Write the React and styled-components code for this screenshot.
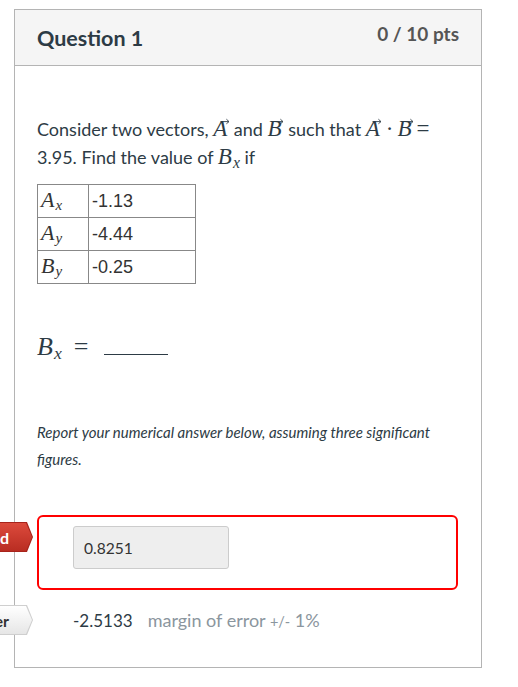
import React from "react";
import styled, { createGlobalStyle } from "styled-components";

const GlobalStyle = createGlobalStyle`
  html, body {
    margin: 0;
    padding: 0;
    background: #fff;
  }
  body {
    font-family: Lato, "Noto Sans", sans-serif;
    color: #2d3b45;
    overflow: hidden;
  }
`;

const Page = styled.div`
  padding: 9px 0 0 14px;
`;

const Card = styled.div`
  position: relative;
  box-sizing: border-box;
  width: 468px;
  height: 659px;
  border: 1px solid #b4b4b4;
`;

const Header = styled.div`
  display: flex;
  justify-content: space-between;
  align-items: flex-start;
  height: 56px;
  box-sizing: border-box;
  padding: 0 22px;
  background: #f5f5f5;
  border-bottom: 1px solid #b4b4b4;
`;

const Title = styled.h2`
  margin: 15px 0 0;
  font-size: 21.5px;
  font-weight: 700;
  color: #2d3b45;
`;

const Points = styled.div`
  margin-top: 12px;
  font-size: 19px;
  font-weight: 700;
  color: #555;
`;

const Body = styled.div`
  padding: 49px 22px 0 22px;
`;

const Text = styled.p`
  margin: 0;
  font-size: 18px;
  line-height: 28px;
  color: #2d3b45;
`;

const M = styled.span`
  font-family: "Liberation Serif", "DejaVu Serif", serif;
  font-style: italic;
  font-size: ${(p) => p.$size || "1.28em"};
  line-height: 0;
`;

const Op = styled.span`
  font-family: "Liberation Serif", "DejaVu Serif", serif;
  font-size: ${(p) => p.$size || "1.28em"};
  margin: 0 ${(p) => p.$gap || "4px"};
  line-height: 0;
`;

const Sub = styled.sub`
  font-family: "Liberation Serif", "DejaVu Serif", serif;
  font-style: italic;
  font-size: 0.68em;
  vertical-align: -0.25em;
  margin-left: 1px;
`;

const VecWrap = styled.span`
  position: relative;
  display: inline-block;
  padding-right: 2px;
`;

const Arrow = styled.svg`
  position: absolute;
  left: 40%;
  top: -10px;
  width: 10px;
  height: 7px;
`;

const ValuesTable = styled.table`
  margin-top: 13px;
  border-collapse: collapse;
  font-family: "Liberation Sans", Arial, sans-serif;
  font-size: 18px;
  color: #333;
`;

const Cell = styled.td`
  border: 1px solid #888;
  height: 33px;
  padding: 0 3px;
  width: ${(p) => p.$w}px;
  box-sizing: border-box;
`;

const Equation = styled.div`
  margin-top: 63px;
  display: flex;
  align-items: baseline;
  height: 40px;
  font-family: "Liberation Serif", "DejaVu Serif", serif;
  font-size: 26px;
  color: #2d3b45;
`;

const Blank = styled.span`
  display: inline-block;
  width: 64px;
  border-bottom: 1.5px solid #2d3b45;
  margin-left: 4px;
`;

const Note = styled.p`
  margin: 32px 0 0;
  font-size: 15px;
  font-style: italic;
  line-height: 27px;
  color: #2d3b45;
`;

const Answers = styled.div`
  position: relative;
  margin-top: 42px;
  padding: 0 23px 0 22px;
`;

const AnswerBox = styled.div`
  box-sizing: border-box;
  height: 75px;
  padding: 9px 0 0 34px;
  border: 2px solid #f00;
  border-radius: 6px;
`;

const Input = styled.div`
  box-sizing: border-box;
  width: 156px;
  height: 43px;
  padding: 0 10px;
  display: flex;
  align-items: center;
  background: #eee;
  border: 1px solid #ccc;
  border-radius: 3px;
  font-size: 15.6px;
  color: #333;
`;

const CorrectRow = styled.div`
  display: flex;
  align-items: center;
  height: 40px;
  margin-top: 10px;
  padding-left: 36px;
`;

const Tag = styled.div`
  position: absolute;
  left: -98px;
  top: ${(p) => p.$top}px;
  width: 116px;
  height: 30px;
  background: ${(p) => (p.$red ? "#a8231b" : "#cfcfcf")};
  clip-path: polygon(0 0, calc(100% - 6px) 0, 100% 50%, calc(100% - 6px) 100%, 0 100%);
`;

const TagFace = styled.div`
  position: absolute;
  inset: 1px 1px 1px 0;
  display: flex;
  align-items: center;
  justify-content: flex-end;
  padding-right: 23px;
  font-size: 16px;
  font-weight: 700;
  white-space: nowrap;
  color: ${(p) => (p.$red ? "#fff" : "#333")};
  background: ${(p) =>
    p.$red
      ? "linear-gradient(#dc4a3c, #b92d22)"
      : "linear-gradient(#ffffff, #e6e6e6)"};
  clip-path: polygon(0 0, calc(100% - 6px) 0, 100% 50%, calc(100% - 6px) 100%, 0 100%);
`;

const Correct = styled.span`
  font-size: 17px;
  color: #2d3b45;
`;

const Margin = styled.span`
  margin-left: 15px;
  font-size: 18px;
  color: #8b969e;
`;

const Small = styled.span`
  font-size: 14.5px;
`;

function Vec({ children }) {
  return (
    <VecWrap>
      <Arrow viewBox="0 0 10 7">
        <path d="M0.5 3.6 H8.8 M6.4 1.2 L9 3.6 L6.4 5.8" stroke="#2d3b45" strokeWidth="0.9" fill="none" />
      </Arrow>
      <M $size="1em">{children}</M>
    </VecWrap>
  );
}

const rows = [
  ["A", "x", "-1.13"],
  ["A", "y", "-4.44"],
  ["B", "y", "-0.25"],
];

export default function App() {
  return (
    <Page>
      <GlobalStyle />
      <Card>
        <Header>
          <Title>Question 1</Title>
          <Points>0 / 10 pts</Points>
        </Header>
        <Body>
          <Text>
            Consider two vectors,{" "}
            <M>
              <Vec>A</Vec>
            </M>{" "}
            and{" "}
            <M>
              <Vec>B</Vec>
            </M>{" "}
            such that{" "}
            <M>
              <Vec>A</Vec>
            </M>
            <Op $gap="4px">·</Op>
            <M>
              <Vec>B</Vec>
            </M>
            <Op $gap="3px">=</Op> 3.95. Find the value of{" "}
            <M>
              B<Sub>x</Sub>
            </M>{" "}
            if
          </Text>
          <ValuesTable>
            <tbody>
              {rows.map(([l, s, v]) => (
                <tr key={l + s}>
                  <Cell $w={51}>
                    <M $size="22px">
                      {l}
                      <Sub>{s}</Sub>
                    </M>
                  </Cell>
                  <Cell $w={107}>{v}</Cell>
                </tr>
              ))}
            </tbody>
          </ValuesTable>
          <Equation>
            <M $size="26px">
              B<Sub>x</Sub>
            </M>
            <Op $size="26px" $gap="12px">=</Op>
            <Blank />
          </Equation>
          <Note>
            Report your numerical answer below, assuming three significant
            figures.
          </Note>
        </Body>
        <Answers>
          <Tag $red $top={7}>
            <TagFace $red>You Answered</TagFace>
          </Tag>
          <AnswerBox>
            <Input>0.8251</Input>
          </AnswerBox>
          <Tag $top={90}>
            <TagFace>Correct Answer</TagFace>
          </Tag>
          <CorrectRow>
            <Correct>-2.5133</Correct>
            <Margin>
              margin of error <Small>+/-</Small> 1%
            </Margin>
          </CorrectRow>
        </Answers>
      </Card>
    </Page>
  );
}
